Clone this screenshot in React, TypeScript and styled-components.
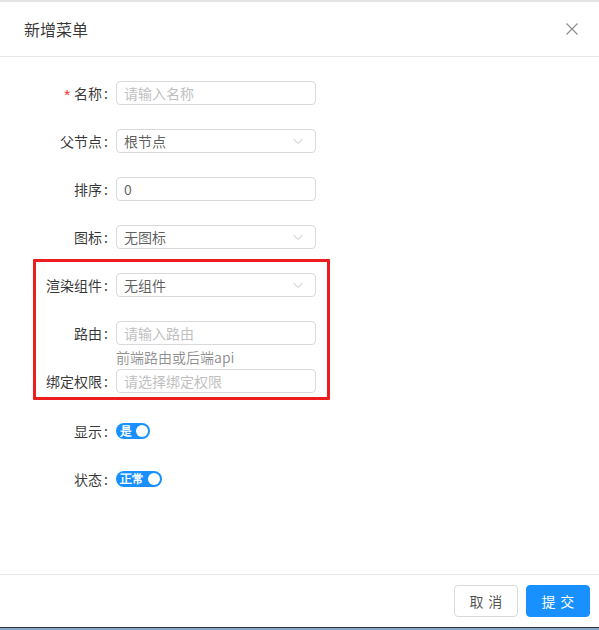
import React from "react";
import styled, { createGlobalStyle } from "styled-components";

const Global = createGlobalStyle`
  html, body { margin: 0; padding: 0; background: #fff; }
  body {
    font-family: "Noto Sans CJK SC", "Noto Sans", sans-serif;
    font-size: 14px;
    color: rgba(0,0,0,0.65);
  }
  * { box-sizing: border-box; }
`;

const Modal = styled.div`
  height: 627px;
  display: flex;
  flex-direction: column;
  background: #fff;
  border-top: 2px solid #e4e4e4;
`;

const Header = styled.div`
  display: flex;
  align-items: center;
  justify-content: space-between;
  padding: 16px 21px 16px 24px;
  border-bottom: 1px solid #e8e8e8;
`;

const Title = styled.div`
  font-size: 16px;
  line-height: 22px;
  color: rgba(0,0,0,0.8);
`;

const Close = styled.button`
  border: 0;
  background: transparent;
  padding: 0;
  width: 12px;
  height: 12px;
  display: flex;
  cursor: pointer;
`;

const Body = styled.div`
  flex: 1;
  padding: 24px;
`;

const Form = styled.div`
  display: flex;
  flex-direction: column;
`;

const Item = styled.div<{ $mb?: number; $h?: number; $top?: boolean }>`
  display: flex;
  align-items: ${(p) => (p.$top ? "flex-start" : "center")};
  margin-bottom: ${(p) => (p.$mb ?? 24)}px;
  min-height: ${(p) => p.$h ?? 24}px;
`;

const Label = styled.label<{ $h?: number }>`
  width: 92px;
  flex-shrink: 0;
  display: flex;
  justify-content: flex-end;
  align-items: center;
  height: ${(p) => p.$h ?? 24}px;
  line-height: ${(p) => p.$h ?? 24}px;
  color: rgba(0,0,0,0.8);
  white-space: nowrap;
  &::after {
    content: ":";
    margin: 0 8px 0 2px;
  }
`;

const Star = styled.span`
  color: #f5222d;
  font-family: "Liberation Sans", sans-serif;
  font-size: 15px;
  margin-right: 4px;
  transform: translateY(2px);
`;

const Control = styled.div`
  width: 200px;
  display: flex;
  flex-direction: column;
`;

const Input = styled.input`
  width: 200px;
  height: 24px;
  padding: 0 7px;
  border: 1px solid #d9d9d9;
  border-radius: 4px;
  font: inherit;
  font-size: 14px;
  color: rgba(0,0,0,0.65);
  outline: none;
  &::placeholder { color: #bfbfbf; }
`;

const SelectBox = styled.div`
  position: relative;
  width: 200px;
  height: 24px;
  padding: 0 24px 0 7px;
  border: 1px solid #d9d9d9;
  border-radius: 4px;
  line-height: 22px;
  color: rgba(0,0,0,0.65);
`;

const Arrow = styled.svg`
  position: absolute;
  right: 11px;
  top: 5px;
`;

const Hint = styled.div`
  height: 24px;
  line-height: 24px;
  color: rgba(0,0,0,0.45);
  white-space: nowrap;
`;

const Group = styled.div`
  position: relative;
`;

const RedFrame = styled.div`
  position: absolute;
  top: -14px;
  left: 9px;
  width: 297px;
  height: 141px;
  border: 3px solid #ee1d1d;
  border-radius: 1px;
  pointer-events: none;
`;

const Switch = styled.button`
  display: inline-flex;
  align-items: center;
  height: 16px;
  min-width: 28px;
  padding: 0;
  border: 0;
  border-radius: 100px;
  background: #1890ff;
  position: relative;
  cursor: pointer;
`;

const SwitchText = styled.span`
  color: #fff;
  font-family: inherit;
  font-size: 12px;
  font-weight: 700;
  line-height: 16px;
  margin: 0 18px 0 4px;
`;

const Handle = styled.span`
  position: absolute;
  right: 2px;
  top: 2px;
  width: 12px;
  height: 12px;
  border-radius: 50%;
  background: #fff;
`;

const Footer = styled.div`
  display: flex;
  justify-content: flex-end;
  gap: 8px;
  padding: 10px 9px 10px 16px;
  border-top: 1px solid #e8e8e8;
`;

const Button = styled.button<{ $primary?: boolean }>`
  display: inline-flex;
  align-items: center;
  justify-content: center;
  width: 64px;
  height: 32px;
  padding: 0;
  border-radius: 4px;
  font-family: inherit;
  font-size: 14px;
  white-space: nowrap;
  border: 1px solid ${(p) => (p.$primary ? "#1890ff" : "#d9d9d9")};
  background: ${(p) => (p.$primary ? "#1890ff" : "#fff")};
  color: ${(p) => (p.$primary ? "#fff" : "rgba(0,0,0,0.7)")};
  cursor: pointer;
  span {
    letter-spacing: 0.34em;
    margin-right: -0.34em;
  }
`;

const BottomEdge = styled.div`
  height: 3px;
  border-top: 1px solid #2f343b;
  background: #86a6cc;
`;

const Select = ({ value }: { value: string }) => (
  <SelectBox>
    {value}
    <Arrow width="12" height="12" viewBox="0 0 12 12">
      <polyline points="1.5,4 6,8.5 10.5,4" fill="none" stroke="#c4c4c4" strokeWidth="1" />
    </Arrow>
  </SelectBox>
);

const Toggle = ({ text }: { text: string }) => (
  <Switch type="button">
    <SwitchText>{text}</SwitchText>
    <Handle />
  </Switch>
);

export default function App() {
  return (
    <>
      <Global />
      <Modal>
        <Header>
          <Title>新增菜单</Title>
          <Close aria-label="关闭">
            <svg width="12" height="12" viewBox="0 0 12 12">
              <path d="M0.5 0.5 L11.5 11.5 M11.5 0.5 L0.5 11.5" stroke="#8c8c8c" strokeWidth="1.1" fill="none" />
            </svg>
          </Close>
        </Header>
        <Body>
          <Form>
            <Item>
              <Label>
                <Star>*</Star>名称
              </Label>
              <Control>
                <Input placeholder="请输入名称" />
              </Control>
            </Item>
            <Item>
              <Label>父节点</Label>
              <Control>
                <Select value="根节点" />
              </Control>
            </Item>
            <Item>
              <Label>排序</Label>
              <Control>
                <Input defaultValue="0" />
              </Control>
            </Item>
            <Item>
              <Label>图标</Label>
              <Control>
                <Select value="无图标" />
              </Control>
            </Item>
            <Group>
              <RedFrame />
              <Item>
                <Label>渲染组件</Label>
                <Control>
                  <Select value="无组件" />
                </Control>
              </Item>
              <Item $top $mb={0}>
                <Label>路由</Label>
                <Control>
                  <Input placeholder="请输入路由" />
                  <Hint>前端路由或后端api</Hint>
                </Control>
              </Item>
              <Item>
                <Label>绑定权限</Label>
                <Control>
                  <Input placeholder="请选择绑定权限" />
                </Control>
              </Item>
            </Group>
            <Item $h={28} $mb={20}>
              <Label $h={28}>显示</Label>
              <Toggle text="是" />
            </Item>
            <Item $h={28} $mb={0}>
              <Label $h={28}>状态</Label>
              <Toggle text="正常" />
            </Item>
          </Form>
        </Body>
        <Footer>
          <Button>
            <span>取消</span>
          </Button>
          <Button $primary>
            <span>提交</span>
          </Button>
        </Footer>
      </Modal>
      <BottomEdge />
    </>
  );
}
